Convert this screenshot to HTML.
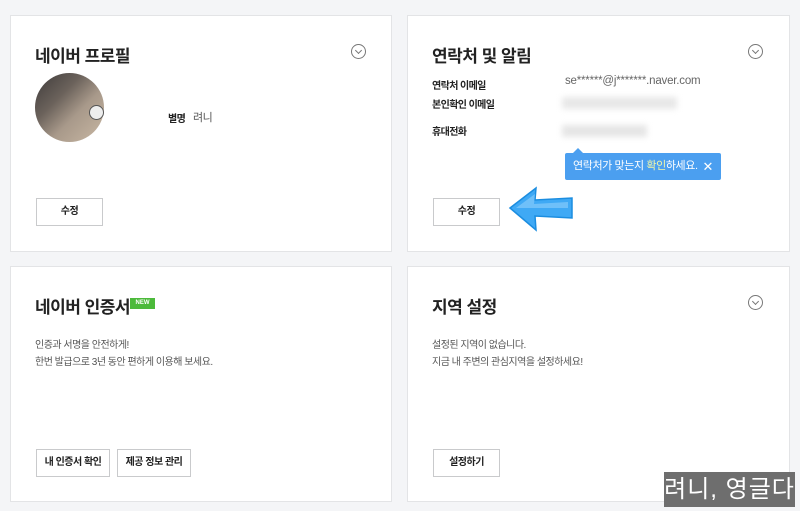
<!DOCTYPE html>
<html><head><meta charset="utf-8"><style>
*{margin:0;padding:0;box-sizing:border-box}
body{width:800px;height:511px;background:#f4f5f7;font-family:"Liberation Sans","Noto Sans CJK KR",sans-serif;position:relative;overflow:hidden;color:#222}
.card{position:absolute;background:#fff;border:1px solid #e3e4e6}
.t{position:absolute;font-size:17px;font-weight:bold;color:#222;letter-spacing:-0.5px}
.btn{position:absolute;height:28px;border:1px solid #c9cacc;background:#fff;font-size:10px;font-weight:bold;text-align:center;line-height:26px;color:#222;letter-spacing:-0.5px}
.chev{position:absolute;width:15px;height:15px;border:1.3px solid #777;border-radius:50%}
.chev:after{content:"";position:absolute;left:4px;top:2.5px;width:4px;height:4px;border-right:1.3px solid #777;border-bottom:1.3px solid #777;transform:rotate(45deg)}
.s{position:absolute;font-size:10px;color:#555;letter-spacing:-0.5px}
.lb{position:absolute;font-size:10px;font-weight:bold;color:#222;letter-spacing:-0.6px}
</style></head><body>
<div class="card" style="left:10px;top:15px;width:382px;height:237px"></div>
<div class="card" style="left:407px;top:15px;width:383px;height:237px"></div>
<div class="card" style="left:10px;top:266px;width:382px;height:236px"></div>
<div class="card" style="left:407px;top:266px;width:383px;height:236px"></div>

<div class="t" style="left:35px;top:42px">네이버 프로필</div>
<div class="chev" style="left:351px;top:44px"></div>
<div style="position:absolute;left:35px;top:73px;width:69px;height:69px;border-radius:50%;background:linear-gradient(135deg,#3d3a3a 0%,#6b625b 35%,#a8998a 60%,#c9b8a4 100%)"></div>
<div style="position:absolute;left:89px;top:105px;width:15px;height:15px;border-radius:50%;background:#eee;border:1px solid #555"></div>
<div class="lb" style="left:168px;top:110px">별명</div>
<div class="s" style="left:193px;top:109px;font-size:11px;color:#555">려니</div>
<div class="btn" style="left:36px;top:198px;width:67px">수정</div>

<div class="t" style="left:432px;top:42px">연락처 및 알림</div>
<div class="chev" style="left:748px;top:44px"></div>
<div class="lb" style="left:432px;top:77px">연락처 이메일</div>
<div class="lb" style="left:432px;top:96px">본인확인 이메일</div>
<div class="lb" style="left:432px;top:123px">휴대전화</div>
<div class="s" style="left:565px;top:75px;font-size:11.5px;color:#666;letter-spacing:-0.2px">se******@j*******.naver.com</div>
<div style="position:absolute;left:562px;top:97px;width:115px;height:12px;background:#e8e8e8;filter:blur(3px)"></div>
<div style="position:absolute;left:562px;top:125px;width:85px;height:12px;background:#e6e6e6;filter:blur(3px)"></div>
<div style="position:absolute;left:565px;top:153px;width:156px;height:27px;background:#4b9ff0;border-radius:2px;color:#fff;font-size:11px;line-height:27px;padding-left:8px;letter-spacing:-0.4px">연락처가 맞는지 <span style="color:#f4f7a8">확인</span>하세요.<span style="position:absolute;right:8px;top:0;font-size:13px">✕</span></div>
<div style="position:absolute;left:573px;top:148px;width:0;height:0;border-left:5px solid transparent;border-right:5px solid transparent;border-bottom:5px solid #4b9ff0"></div>
<div class="btn" style="left:433px;top:198px;width:67px">수정</div>
<svg style="position:absolute;left:508px;top:186px" width="66" height="46"><polygon points="2,22 28,2 27,14 64,12 64,32 27,30 28,44" fill="#3fa9f5" stroke="#1b8de0" stroke-width="1.5"/><polygon points="8,22 27,8 26,18 60,16 60,22" fill="#8fd0fb" opacity=".6"/></svg>

<div class="t" style="left:35px;top:293px">네이버 인증서</div>
<div style="position:absolute;left:130px;top:298px;width:25px;height:11px;background:#4cba3b;color:#fff;font-size:6px;font-weight:bold;line-height:11px;text-align:center">NEW</div>
<div class="s" style="left:35px;top:336px">인증과 서명을 안전하게!</div>
<div class="s" style="left:35px;top:353px">한번 발급으로 3년 동안 편하게 이용해 보세요.</div>
<div class="btn" style="left:36px;top:449px;width:74px">내 인증서 확인</div>
<div class="btn" style="left:117px;top:449px;width:74px">제공 정보 관리</div>

<div class="t" style="left:432px;top:293px">지역 설정</div>
<div class="chev" style="left:748px;top:295px"></div>
<div class="s" style="left:432px;top:336px">설정된 지역이 없습니다.</div>
<div class="s" style="left:432px;top:353px">지금 내 주변의 관심지역을 설정하세요!</div>
<div class="btn" style="left:433px;top:449px;width:67px">설정하기</div>

<div style="position:absolute;left:664px;top:472px;width:131px;height:35px;background:#6e6e6e;color:#fff;font-size:24px;line-height:35px;text-align:center;letter-spacing:1px">려니, 영글다</div>
</body></html>
